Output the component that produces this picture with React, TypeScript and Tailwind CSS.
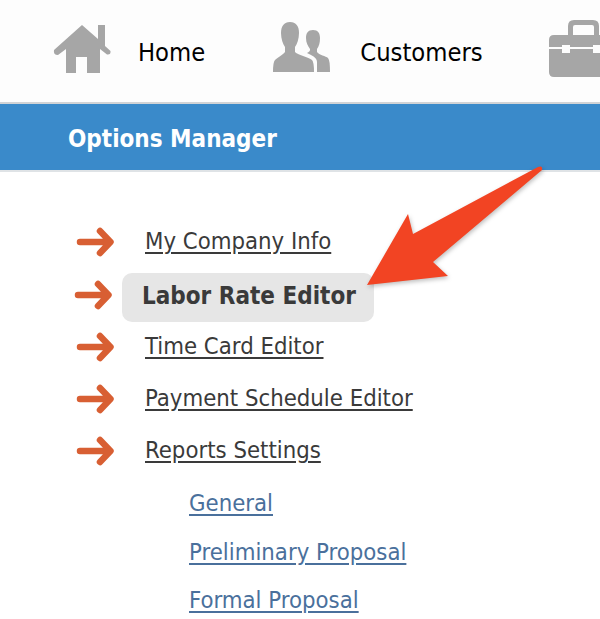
const font = "font-['DejaVu_Sans_Condensed','DejaVu_Sans',sans-serif]";

function HomeIcon() {
  return (
    <svg width="60" height="51" viewBox="0 0 60 51" className="shrink-0">
      <path
        d="M30 2 L46 16 V2 H53 V23 L58.5 28 Q59 32 55 31.5 L48 26 V50 H35 V34 H24 V50 H14 V26 L6 32 Q1 32 2 27 Z"
        fill="#a6a6a6"
      />
    </svg>
  );
}

function CustomersIcon() {
  return (
    <svg width="60" height="52" viewBox="0 0 60 52" className="shrink-0">
      <path
        d="M19 1 C25 1 28 5 28 12 C28 18 26 23 24 26 V31 C26 34 38 36 41 39 Q43 41 43 51 H2 Q2 41 4 39 C7 36 12 34 14 31 V26 C12 23 10 18 10 12 C10 5 13 1 19 1 Z"
        fill="#a6a6a6"
      />
      <path
        d="M42 9 C47 9 49 12 49 17 C49 22 48 25 46 28 V31 C48 34 55 35 57 37 Q59 39 59 51 H46 V41 Q46 37 40 34 L36 32 C38 31 39 30 39 29 V28 C37 25 35 22 35 17 C35 12 37 9 42 9 Z"
        fill="#a6a6a6"
      />
    </svg>
  );
}

function CaseIcon() {
  return (
    <svg width="60" height="58" viewBox="0 0 60 58" className="shrink-0">
      <path d="M19 15 V6 Q19 0 25 0 H44 Q50 0 50 6 V15 H45 V7 Q45 5 43 5 H26 Q24 5 24 7 V15 Z" fill="#a6a6a6" />
      <path d="M5 15 H60 V27 H52 V25 H44 V27 H21 V25 H13 V27 H0 V20 Q0 15 5 15 Z" fill="#a6a6a6" />
      <path d="M0 29 H13 V33 H21 V29 H44 V33 H52 V29 H60 V57 H5 Q0 57 0 52 Z" fill="#a6a6a6" />
    </svg>
  );
}

function BulletArrow() {
  return (
    <svg width="40" height="32" viewBox="0 0 40 32" className="shrink-0">
      <path d="M5 16 H35 M25 5 L35.5 16 L25 27" fill="none" stroke="#d85f33" strokeWidth="6.5" strokeLinecap="round" strokeLinejoin="round" />
    </svg>
  );
}

const items = ["My Company Info", "Labor Rate Editor", "Time Card Editor", "Payment Schedule Editor", "Reports Settings"];
const subItems = ["General", "Preliminary Proposal", "Formal Proposal"];

export default function App() {
  return (
    <div className={`relative h-[619px] w-[600px] overflow-hidden bg-white ${font}`}>
      <nav className="flex h-[104px] items-start overflow-hidden border-b-2 border-[#d0d3d6] bg-[#fdfdfd] pl-[52px] pt-[22px]">
        <div className="flex h-[62px] items-center">
          <div className="mt-[1px] self-start">
            <HomeIcon />
          </div>
          <span className="ml-[26px] text-[25.3px] text-black">Home</span>
        </div>
        <div className="ml-[66px] flex h-[62px] items-center">
          <div className="-mt-[1px] self-start">
            <CustomersIcon />
          </div>
          <span className="ml-[29px] text-[25.3px] text-black">Customers</span>
        </div>
        <div className="ml-[66px] -mt-[2px]">
          <CaseIcon />
        </div>
      </nav>

      <header className="flex h-[68px] items-center border-b-2 border-[#dfe3e6] bg-[#3a8aca] pl-[68px] pt-[3px]">
        <h1 className="text-[24px] font-bold text-white">Options Manager</h1>
      </header>

      <ul className="ml-[74px] mt-[44px] flex flex-col">
        {items.map((item) =>
          item === "Labor Rate Editor" ? (
            <li key={item} className="-ml-[1px] flex h-[53px] items-center">
              <BulletArrow />
              <span className="ml-[9px] mt-[5px] flex h-[49px] w-[252px] items-center self-start rounded-[10px] bg-[#e6e6e6] pb-[3px] pl-[20px] text-[24px] font-bold text-[#3a3a3a]">
                {item}
              </span>
            </li>
          ) : (
            <li key={item} className="flex h-[52px] items-center pl-[1px]">
              <BulletArrow />
              <a href="#" className="ml-[30px] text-[23.7px] text-[#3a3a3a] underline underline-offset-[3px]">
                {item}
              </a>
            </li>
          ),
        )}
      </ul>

      <ul className="ml-[189px] mt-[3px] flex flex-col">
        {subItems.map((item) => (
          <li key={item} className="flex h-[48.5px] items-center">
            <a href="#" className="text-[23.7px] text-[#4a709c] underline underline-offset-[3px]">
              {item}
            </a>
          </li>
        ))}
      </ul>

      {/* callout arrow drawn over the page */}
      <svg width="600" height="619" viewBox="0 0 600 619" className="absolute left-0 top-0" style={{ filter: "drop-shadow(1px 2px 2px rgba(0,0,0,0.25))" }}>
        <path
          d="M367 285 L408 214 L413 234 L538 167 Q543 165 542 170 L433 262 L448 276 Z"
          fill="#f24423"
        />
      </svg>
    </div>
  );
}
